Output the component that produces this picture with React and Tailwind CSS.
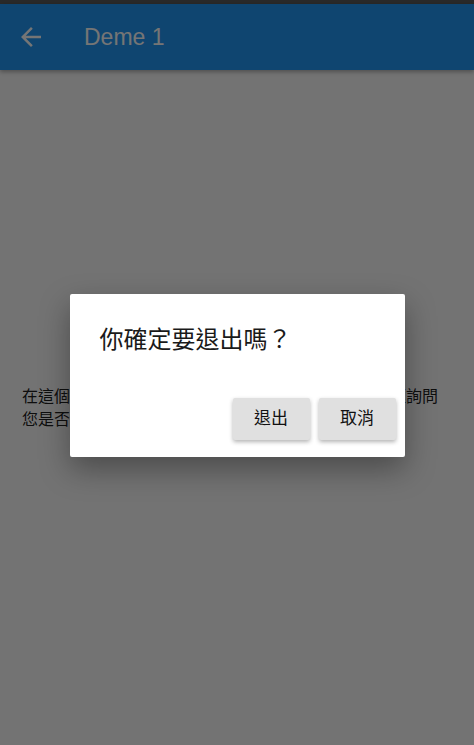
import React from "react";

export default function App() {
  return (
    <div
      className="relative flex h-[745px] w-full flex-col overflow-hidden bg-[#fafafa]"
      style={{ fontFamily: 'Roboto, "Noto Sans CJK TC", sans-serif' }}
    >
      <div className="h-[4px] shrink-0 bg-[#5a5a5a]" />
      <header className="relative z-10 flex h-[66px] shrink-0 items-center bg-[#2196f3] shadow-[0_2px_4px_rgba(0,0,0,0.3)]">
        <div className="ml-[16px] flex h-[30px] w-[30px] items-center justify-center">
          <svg viewBox="0 0 24 24" width="30" height="30" fill="#ffffff">
            <path d="M20 11H7.83l5.59-5.59L12 4l-8 8 8 8 1.41-1.41L7.83 13H20v-2z" />
          </svg>
        </div>
        <h1
          className="ml-[38px] text-[23px] leading-none text-white"
          style={{ fontFamily: '"Liberation Sans", Arial, sans-serif' }}
        >
          Deme 1
        </h1>
      </header>
      <main className="flex flex-1 items-center px-[22px]">
        <p className="text-[16px] leading-[23px] text-black/90">
          在這個範例中，當使用者按下返回鍵時，會跳出對話框詢問您是否確定要離開此頁面。
        </p>
      </main>

      <div className="absolute inset-0 z-20 flex items-center justify-center bg-black/[0.54] pt-[6px]">
        <div className="flex w-[335px] flex-col rounded-[2px] bg-white shadow-[0_12px_30px_rgba(0,0,0,0.35)]">
          <h2 className="pl-[30px] pt-[32px] text-[24px] leading-[28px] text-[#1a1a1a]">
            你確定要退出嗎？
          </h2>
          <div className="mt-[44px] mb-[17px] mr-[9px] flex justify-end gap-[9px]">
            <button className="flex h-[42px] w-[77px] items-center justify-center rounded-[2px] bg-[#e0e0e0] text-[17px] text-[#111] shadow-[0_2px_4px_rgba(0,0,0,0.3)]">
              退出
            </button>
            <button className="flex h-[42px] w-[77px] items-center justify-center rounded-[2px] bg-[#e0e0e0] text-[17px] text-[#111] shadow-[0_2px_4px_rgba(0,0,0,0.3)]">
              取消
            </button>
          </div>
        </div>
      </div>
    </div>
  );
}
